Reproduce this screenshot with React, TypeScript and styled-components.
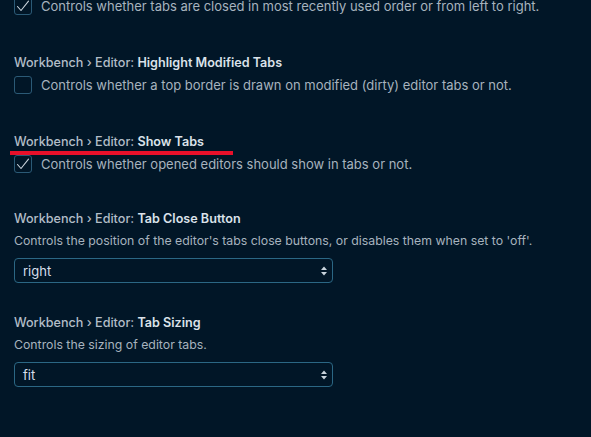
import React from "react";
import styled, { createGlobalStyle } from "styled-components";

const Global = createGlobalStyle`
  html, body { margin: 0; padding: 0; background: #011627; }
  body { font-family: Inter, "Noto Sans", sans-serif; -webkit-font-smoothing: antialiased; }
`;

const Page = styled.div`
  position: relative;
  width: 591px;
  height: 437px;
  overflow: hidden;
  background: #011627;
  display: flex;
  flex-direction: column;
`;

const Item = styled.div<{ $top: number }>`
  display: flex;
  flex-direction: column;
  padding: 0 14px;
  margin-top: ${(p) => p.$top}px;
`;

const Title = styled.div`
  font-size: 12.6px;
  line-height: 18px;
  height: 18px;
  color: #b3bdc7;
  font-weight: 500;
  white-space: nowrap;
`;

const Label = styled.span`
  color: #dbe2ea;
  font-weight: 600;
`;

const Description = styled.div`
  margin-top: 4px;
  font-size: 12.3px;
  line-height: 18px;
  color: #a7b3be;
  white-space: nowrap;
`;

const CheckRow = styled.label<{ $first?: boolean }>`
  margin-top: ${(p) => (p.$first ? 0 : 4)}px;
  display: flex;
  align-items: center;
  gap: 9px;
  height: 18px;
  font-size: 13px;
  line-height: 18px;
  color: #a7b3be;
  white-space: nowrap;
`;

const CheckBox = styled.span`
  box-sizing: border-box;
  width: 18px;
  height: 18px;
  flex: none;
  border: 1px solid #2b5a76;
  border-radius: 3px;
  display: flex;
  align-items: center;
  justify-content: center;
`;

const Select = styled.div`
  box-sizing: border-box;
  margin-top: 8px;
  width: 319px;
  height: 25px;
  border: 1px solid #2b6784;
  border-radius: 4px;
  display: flex;
  align-items: center;
  justify-content: space-between;
  padding: 0 4px 0 8px;
  font-size: 13px;
  color: #d6deeb;
`;

const Underline = styled.div`
  position: absolute;
  left: 10px;
  top: 151px;
  width: 223px;
  height: 4px;
  background: #e8102a;
`;

const Check = () => (
  <svg width="14" height="12" viewBox="0 0 14 12" fill="none">
    <path d="M1.5 6.5 L5 10.5 L12.5 1.2" stroke="#c9d3dc" strokeWidth="1.1" strokeLinecap="round" strokeLinejoin="round" />
  </svg>
);

const Arrows = () => (
  <svg width="8" height="12" viewBox="0 0 8 12">
    <path d="M4 1.5 L7 5 L1 5 Z" fill="#c9d3dc" />
    <path d="M4 10.5 L7 7 L1 7 Z" fill="#c9d3dc" />
  </svg>
);

const CheckSetting = ({ checked, text, first }: { checked: boolean; text: string; first?: boolean }) => (
  <CheckRow $first={first}>
    <CheckBox>{checked && <Check />}</CheckBox>
    {text}
  </CheckRow>
);

export default function App() {
  return (
    <Page>
      <Global />
      <Item $top={-3}>
        <CheckSetting first checked text="Controls whether tabs are closed in most recently used order or from left to right." />
      </Item>
      <Item $top={39}>
        <Title>Workbench › Editor: <Label>Highlight Modified Tabs</Label></Title>
        <CheckSetting checked={false} text="Controls whether a top border is drawn on modified (dirty) editor tabs or not." />
      </Item>
      <Item $top={39}>
        <Title>Workbench › Editor: <Label>Show Tabs</Label></Title>
        <CheckSetting checked text="Controls whether opened editors should show in tabs or not." />
      </Item>
      <Item $top={37}>
        <Title>Workbench › Editor: <Label>Tab Close Button</Label></Title>
        <Description>Controls the position of the editor's tabs close buttons, or disables them when set to 'off'.</Description>
        <Select>right<Arrows /></Select>
      </Item>
      <Item $top={31}>
        <Title>Workbench › Editor: <Label>Tab Sizing</Label></Title>
        <Description>Controls the sizing of editor tabs.</Description>
        <Select>fit<Arrows /></Select>
      </Item>
      <Underline />
    </Page>
  );
}
